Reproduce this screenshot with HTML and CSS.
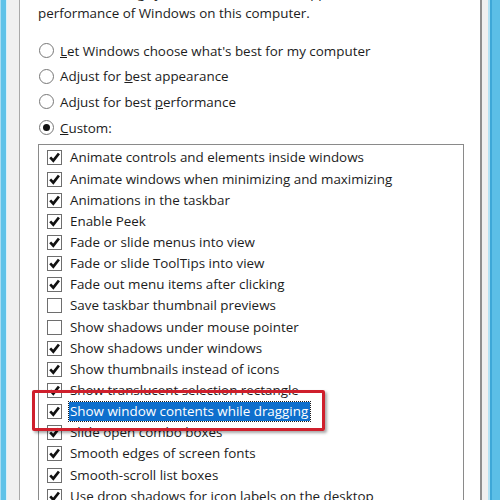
FILE: index.html
```html
<!DOCTYPE html>
<html lang="en">
  <head>
    <meta charset="UTF-8" />
    <meta name="viewport" content="width=device-width, initial-scale=1.0" />
    <title>Performance Options</title>
    <link rel="stylesheet" href="styles.css">
  </head>
  <body>
    <div class="window">
      <div class="edge-left"></div>
      <div class="chrome-left"></div>

      <div class="panel">
        <p class="intro">Select the settings you want to use for the appearance and<br />performance of Windows on this computer.</p>

        <div class="radio-group">
          <label class="radio"><span class="dot"></span><span><u>L</u>et Windows choose what's best for my computer</span></label>
          <label class="radio"><span class="dot"></span><span>Adjust for <u>b</u>est appearance</span></label>
          <label class="radio"><span class="dot"></span><span>Adjust for best <u>p</u>erformance</span></label>
          <label class="radio checked"><span class="dot"></span><span><u>C</u>ustom:</span></label>
        </div>

        <div class="listbox">
          <div class="item on"><span class="box"></span><span class="text">Animate controls and elements inside windows</span></div>
          <div class="item on"><span class="box"></span><span class="text">Animate windows when minimizing and maximizing</span></div>
          <div class="item on"><span class="box"></span><span class="text">Animations in the taskbar</span></div>
          <div class="item on"><span class="box"></span><span class="text">Enable Peek</span></div>
          <div class="item on"><span class="box"></span><span class="text">Fade or slide menus into view</span></div>
          <div class="item on"><span class="box"></span><span class="text">Fade or slide ToolTips into view</span></div>
          <div class="item on"><span class="box"></span><span class="text">Fade out menu items after clicking</span></div>
          <div class="item"><span class="box"></span><span class="text">Save taskbar thumbnail previews</span></div>
          <div class="item"><span class="box"></span><span class="text">Show shadows under mouse pointer</span></div>
          <div class="item on"><span class="box"></span><span class="text">Show shadows under windows</span></div>
          <div class="item on"><span class="box"></span><span class="text">Show thumbnails instead of icons</span></div>
          <div class="item on"><span class="box"></span><span class="text">Show translucent selection rectangle</span></div>
          <div class="item on selected"><span class="box"></span><span class="text">Show window contents while dragging</span></div>
          <div class="item on"><span class="box"></span><span class="text">Slide open combo boxes</span></div>
          <div class="item on"><span class="box"></span><span class="text">Smooth edges of screen fonts</span></div>
          <div class="item on"><span class="box"></span><span class="text">Smooth-scroll list boxes</span></div>
          <div class="item on"><span class="box"></span><span class="text">Use drop shadows for icon labels on the desktop</span></div>
        </div>

        <div class="callout"></div>
      </div>

      <div class="chrome-right"></div>
      <div class="edge-right"></div>
    </div>

    <svg width="0" height="0" style="position:absolute">
      <defs>
        <symbol id="tick" viewBox="0 0 15 15">
          <path d="M3.2 7.4 L6.3 10.6 L11.9 3.5" fill="none" stroke="#111" stroke-width="2.7" />
        </symbol>
      </defs>
    </svg>

    <script>
      document.querySelectorAll('.item.on .box').forEach((box) => {
        box.innerHTML = '<svg width="15" height="15"><use href="#tick" /></svg>';
      });
    </script>
  </body>
</html>
```

FILE: styles.css
```css
body {
  margin: 0;
  font-family: 'Open Sans', 'Noto Sans', sans-serif;
  font-size: 13.4px;
  color: #1c1c1c;
  overflow: hidden;
}

.window {
  display: flex;
  height: 500px;
  width: 500px;
  overflow: hidden;
}

.edge-left {
  width: 5px;
  background-color: #5fc2e8;
  border-left: 1px solid #a6dcf2;
  border-right: 1px solid #d9f0fa;
}

.chrome-left {
  width: 12px;
  background-color: #f0f0f0;
  border-right: 1px solid #a9a9a9;
}

.panel {
  flex: 1;
  position: relative;
  background-color: #fff;
  border-right: 2px solid #8f8f8f;
  padding: 0 16px 0 18px;
}

.chrome-right {
  width: 6px;
  background-color: #f0f0f0;
}

.edge-right {
  width: 10px;
  background-color: #5cbfe7;
  border-left: 2px solid #b6e3f4;
  box-shadow: inset 2px 0 0 #3ea8d8;
}

.intro {
  margin: -17px 0 0;
  line-height: 20px;
  white-space: nowrap;
}

.radio-group {
  margin-top: 15px;
  padding-left: 1px;
}

.radio {
  display: flex;
  align-items: center;
  gap: 6px;
  height: 25.6px;
}

.dot {
  width: 13px;
  height: 13px;
  border: 1px solid #777;
  border-radius: 50%;
  display: flex;
  align-items: center;
  justify-content: center;
  background-color: #fff;
}

.radio.checked .dot::after {
  content: '';
  width: 7px;
  height: 7px;
  border-radius: 50%;
  background-color: #111;
}

.listbox {
  margin-top: 4px;
  border: 1px solid #8a8a8a;
  padding: 2px 0 0 8px;
  height: 400px;
}

.item {
  display: flex;
  align-items: center;
  height: 21.15px;
  white-space: nowrap;
}

.box {
  width: 13px;
  height: 13px;
  border: 1px solid #6e6e6e;
  margin-right: 7px;
  flex-shrink: 0;
  position: relative;
}

.box svg {
  position: absolute;
  left: -1px;
  top: -1px;
}

.text {
  padding: 1px 2px 2px 1px;
  line-height: 16px;
}

.item.selected .text {
  background-color: #0e6fcd;
  color: #fff;
  outline: 1px dotted #1b1b1b;
  outline-offset: 0;
}

.callout {
  position: absolute;
  left: 12px;
  top: 390px;
  width: 287px;
  height: 35px;
  border: 3px solid #cf1f2c;
  border-radius: 2px;
  box-shadow: 2px 2px 3px rgba(0, 0, 0, 0.35);
}
```
